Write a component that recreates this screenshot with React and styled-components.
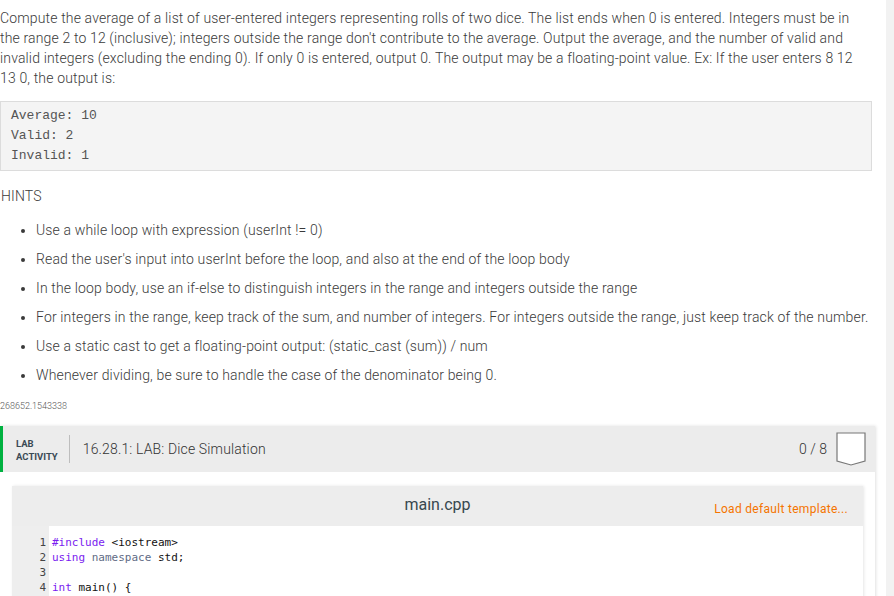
import React from 'react';
import styled, { createGlobalStyle } from 'styled-components';

const GlobalStyle = createGlobalStyle`
  html, body {
    margin: 0;
    padding: 0;
    background: #fff;
  }
  body {
    font-family: Roboto, "Noto Sans", sans-serif;
    color: #333;
    overflow: hidden;
  }
`;

const Page = styled.div`
  display: flex;
  height: 596px;
  width: 894px;
`;

const Content = styled.main`
  width: 875px;
  flex: none;
`;

const SideRail = styled.div`
  margin-left: auto;
  width: 8px;
  background: #f2f2f2;
`;

const Prompt = styled.p`
  margin: 0;
  padding-top: 8px;
  padding-right: 12px;
  font-size: 14px;
  font-weight: 300;
  letter-spacing: 0.15px;
  line-height: 20px;
  color: #3a3a3a;
`;

const OutputBox = styled.pre`
  margin: 13px 3px 0 0;
  padding: 4px 10px 4px;
  background: #f4f4f4;
  border: 1px solid #dcdcdc;
  font-family: "Liberation Mono", "Courier New", monospace;
  font-size: 13px;
  line-height: 20px;
  color: #555;
`;

const HintsTitle = styled.h3`
  margin: 15px 0 0 1px;
  font-size: 14px;
  font-weight: 300;
  letter-spacing: 0.15px;
  line-height: 20px;
  color: #3a3a3a;
`;

const HintList = styled.ul`
  margin: 14px 0 0;
  padding-left: 36px;
  list-style: disc;

  li {
    font-size: 14px;
    font-weight: 300;
    letter-spacing: 0.15px;
    line-height: 20px;
    color: #3a3a3a;
    margin-bottom: 9px;
  }
`;

const RefId = styled.div`
  margin-top: 15px;
  font-size: 9px;
  font-weight: 300;
  color: #555;
  line-height: 12px;
`;

const LabCard = styled.section`
  margin-top: 14px;
  background: #fff;
  box-shadow: 1px 0 3px rgba(0, 0, 0, 0.12);
`;

const LabHeader = styled.header`
  display: flex;
  align-items: center;
  height: 46px;
  background: #ececec;
  border-left: 3px solid #00b140;
  padding: 0 9px 0 13px;
`;

const LabTag = styled.div`
  font-size: 9.5px;
  font-weight: 700;
  line-height: 13px;
  color: #3a4a55;
  padding-top: 2px;
  padding-right: 11px;
  border-right: 1px solid #bdbdbd;
`;

const LabTitle = styled.h2`
  margin: 0 0 0 13px;
  font-size: 14px;
  font-weight: 300;
  letter-spacing: 0.15px;
  color: #333;
  flex: 1;
`;

const Score = styled.span`
  font-size: 14px;
  font-weight: 300;
  color: #333;
  margin-right: 9px;
`;

const Badge = styled.svg`
  display: block;
  width: 30px;
  height: 34px;
`;

const LabBody = styled.div`
  padding: 14px 12px 0;
`;

const Editor = styled.div`
  box-shadow: 1px 0 3px rgba(0, 0, 0, 0.1);
`;

const EditorBar = styled.div`
  position: relative;
  display: flex;
  align-items: center;
  justify-content: flex-end;
  height: 40px;
  background: #ededed;
  padding-right: 15px;
`;

const FileName = styled.div`
  position: absolute;
  left: 0;
  right: 0;
  top: 9px;
  text-align: center;
  font-size: 16px;
  font-weight: 400;
  color: #37474f;
  pointer-events: none;
`;

const TemplateLink = styled.a`
  position: relative;
  margin-top: 6px;
  font-size: 12px;
  letter-spacing: 0.3px;
  color: #f57400;
  text-decoration: none;
`;

const CodeArea = styled.div`
  display: flex;
  padding-top: 9px;
  background: #fff;
  height: 80px;
`;

const Gutter = styled.div`
  width: 37px;
  background: #eeeeee;
  margin-top: -9px;
  padding-top: 9px;
  text-align: right;
  flex: none;
`;

const CodeLine = styled.div`
  font-family: "DejaVu Sans Mono", "Liberation Mono", monospace;
  font-size: 11px;
  line-height: 15px;
  height: 15px;
  white-space: pre;
  color: ${p => (p.$num ? '#444' : '#111')};
  padding: ${p => (p.$num ? '0 3px 0 0' : '0 0 0 3px')};
`;

const Tok = styled.span`
  color: ${p => (p.$kind === 'kw' ? '#7a1cf0' : p.$kind === 'def' ? '#5f6b85' : '#111')};
`;

const hints = [
  'Use a while loop with expression (userInt != 0)',
  "Read the user's input into userInt before the loop, and also at the end of the loop body",
  'In the loop body, use an if-else to distinguish integers in the range and integers outside the range',
  'For integers in the range, keep track of the sum, and number of integers. For integers outside the range, just keep track of the number.',
  'Use a static cast to get a floating-point output: (static_cast (sum)) / num',
  'Whenever dividing, be sure to handle the case of the denominator being 0.',
];

const code = [
  [['kw', '#include'], ['', ' <iostream>']],
  [['kw', 'using'], ['', ' '], ['def', 'namespace'], ['', ' std;']],
  [],
  [['kw', 'int'], ['', ' main() {']],
];

export default function App() {
  return (
    <>
      <GlobalStyle />
      <Page>
        <Content>
          <Prompt>
            Compute the average of a list of user-entered integers representing rolls of two dice. The list ends when 0 is entered. Integers must be in the range 2 to 12 (inclusive); integers outside the range don't contribute to the average. Output the average, and the number of valid and invalid integers (excluding the ending 0). If only 0 is entered, output 0. The output may be a floating-point value. Ex: If the user enters 8 12 13 0, the output is:
          </Prompt>
          <OutputBox>{'Average: 10\nValid: 2\nInvalid: 1'}</OutputBox>
          <HintsTitle>HINTS</HintsTitle>
          <HintList>
            {hints.map(h => (
              <li key={h}>{h}</li>
            ))}
          </HintList>
          <RefId>268652.1543338</RefId>
          <LabCard>
            <LabHeader>
              <LabTag>
                LAB
                <br />
                ACTIVITY
              </LabTag>
              <LabTitle>16.28.1: LAB: Dice Simulation</LabTitle>
              <Score>0 / 8</Score>
              <Badge viewBox="0 0 30 34">
                <path d="M1 1 H29 V29 L15 33 L1 29 Z" fill="#fff" stroke="#777" strokeWidth="1.2" />
              </Badge>
            </LabHeader>
            <LabBody>
              <Editor>
                <EditorBar>
                  <FileName>main.cpp</FileName>
                  <TemplateLink href="#">Load default template...</TemplateLink>
                </EditorBar>
                <CodeArea>
                  <Gutter>
                    {code.map((_, i) => (
                      <CodeLine $num key={i}>{i + 1}</CodeLine>
                    ))}
                  </Gutter>
                  <div>
                    {code.map((line, i) => (
                      <CodeLine key={i}>
                        {line.map(([k, t], j) => (
                          <Tok $kind={k} key={j}>{t}</Tok>
                        ))}
                      </CodeLine>
                    ))}
                  </div>
                </CodeArea>
              </Editor>
            </LabBody>
          </LabCard>
        </Content>
        <SideRail />
      </Page>
    </>
  );
}
